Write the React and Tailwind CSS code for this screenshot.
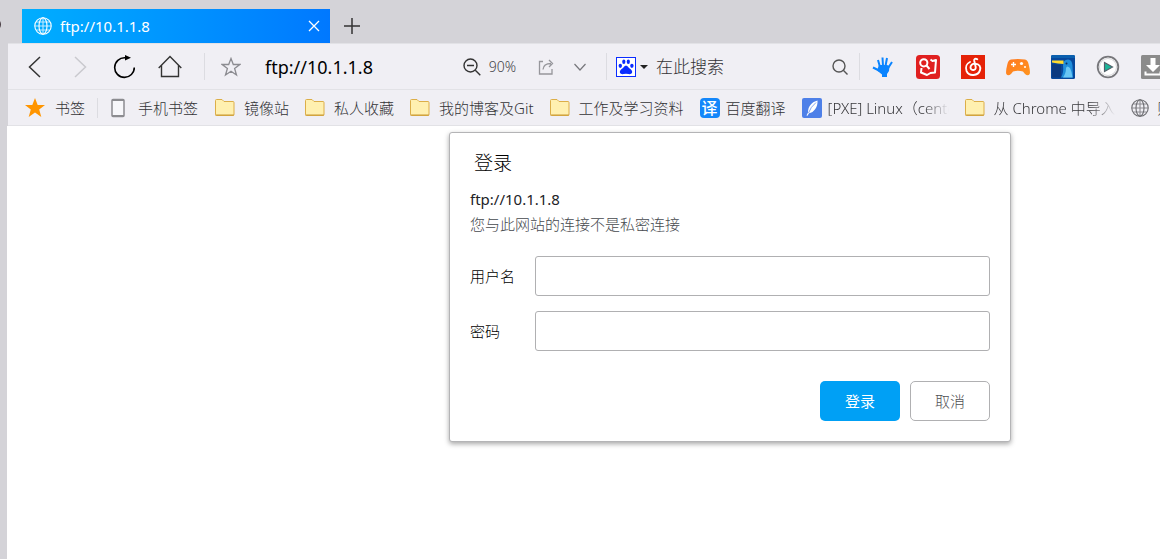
import React from 'react'

const Globe = ({ className }) => (
  <svg className={className} viewBox="0 0 18 18" fill="none" stroke="currentColor" strokeWidth="1.1">
    <circle cx="9" cy="9" r="8.2" />
    <ellipse cx="9" cy="9" rx="4" ry="8.2" />
    <path d="M9 .8v16.4M.8 9h16.4M2.2 5h13.6M2.2 13h13.6" strokeOpacity=".75" />
  </svg>
)

const Folder = () => (
  <svg className="h-5 w-5 shrink-0" viewBox="0 0 20 20">
    <path d="M.5 2.5q0-1 1-1h5.500l2 2h9q1 0 1 1v12q0 1-1 1H1.500q-1 0-1-1z" fill="#fff0b0" stroke="#dcae48" />
    <path d="M.5 17h18.500" stroke="#c99a35" />
  </svg>
)

const Star = () => (
  <svg className="h-5 w-5 shrink-0" viewBox="0 0 20 20">
    <path d="M10 0l2.700 7H20l-5.800 4.600L16.300 19 10 14.600 3.700 19l2.100-7.400L0 7h7.300z" fill="#ff9500" />
  </svg>
)

const Phone = () => (
  <svg className="h-5 w-4 shrink-0" viewBox="0 0 16 20">
    <rect x="2" y="1.500" width="12" height="17" rx="1" fill="#f7f7fa" stroke="#8c8c90" strokeWidth="1.500" />
    <path d="M2 2h12M2 18h12" stroke="#8c8c90" strokeWidth="2" />
  </svg>
)

const Feather = () => (
  <svg className="h-5 w-5 shrink-0" viewBox="0 0 20 20">
    <rect width="20" height="20" rx="2" fill="#4e80e8" />
    <path d="M15.500 2.500C10 4 6 8 6 14.500L4.500 17.500l1 .3 1.500-2.500C12 14.500 16 9 15.500 2.500z" fill="#fff" />
    <path d="M14 4.500Q8.500 9 6.500 15" stroke="#4e80e8" strokeWidth=".7" fill="none" />
  </svg>
)

const Translate = () => (
  <span className="flex h-5 w-5 shrink-0 items-center justify-center rounded bg-[#1487fa] text-base font-medium text-white">译</span>
)

const bookmarks = [
  { icon: <Folder />, label: '镜像站' },
  { icon: <Folder />, label: '私人收藏' },
  { icon: <Folder />, label: '我的博客及Git' },
  { icon: <Folder />, label: '工作及学习资料' },
  { icon: <Translate />, label: '百度翻译', tight: true },
  { icon: <Feather />, label: '[PXE] Linux（centos）', tight: true, fade: true },
  { icon: <Folder />, label: '从 Chrome 中导入', fade: true },
  { icon: <Globe className="h-[18px] w-[18px] shrink-0 text-[#6c6c70]" />, label: '购物' },
]

const Bookmark = ({ icon, label, tight, fade }) => (
  <a href="#" className={`flex shrink-0 items-center ${tight ? 'gap-[6px]' : 'gap-[9px]'}`}>
    {icon}
    {fade ? (
      <span className="w-[121px] overflow-hidden bg-linear-to-r from-[#333336] from-80% to-transparent bg-clip-text whitespace-nowrap text-transparent">
        {label}
      </span>
    ) : (
      <span className="whitespace-nowrap">{label}</span>
    )}
  </a>
)

const TabBar = () => (
  <div className="flex h-[43px] items-end pl-[14px]">
    <div className="flex h-[34px] w-[308px] items-center bg-linear-to-r from-[#00aeff] to-[#0078ff] pr-[10px] pl-3 text-white">
      <Globe className="h-[18px] w-[18px]" />
      <span className="ml-2 flex-1 pt-px text-[15px]">ftp://10.1.1.8</span>
      <button aria-label="关闭标签页">
        <svg className="h-3 w-3" viewBox="0 0 12 12" stroke="currentColor" strokeWidth="1.300">
          <path d="M1 1l10 10M11 1L1 11" />
        </svg>
      </button>
    </div>
    <button aria-label="新建标签页" className="mb-2 ml-[13px]">
      <svg className="h-[18px] w-[18px]" viewBox="0 0 18 18" stroke="#333" strokeWidth="1.500">
        <path d="M9 1v16M1 9h16" />
      </svg>
    </button>
  </div>
)

const Extensions = () => (
  <div className="-mr-[5px] flex shrink-0 items-center gap-[21px]">
    <button aria-label="手势">
      <svg className="h-6 w-6" viewBox="0 0 24 24" fill="none" stroke="#0a84ff" strokeWidth="2">
        <path d="M9 12L7 5M12 11l-.5-8.500M14.500 11l1.500-8M16.500 14l4.500-7M9 16l-7-3.500" />
        <path d="M8 10l8 0 2.500 1-.5 5-2 3v3h-5v-2.500l-5-4z" fill="#0a84ff" stroke="none" />
      </svg>
    </button>
    <button aria-label="截图">
      <svg className="h-6 w-6" viewBox="0 0 24 24" fill="none" stroke="#fff" strokeLinejoin="round">
        <rect width="24" height="24" rx="3.500" fill="#e02020" stroke="none" />
        <circle cx="7.800" cy="7.800" r="3.600" strokeWidth="2" />
        <path d="M10.500 10.500l3 3.500M14.500 4.500l2 1.500 3.500-1-1 12.500-4.500.5-3.500 2-6-2.500.5-4.500" strokeWidth="2" />
      </svg>
    </button>
    <button aria-label="音乐">
      <svg className="h-6 w-6" viewBox="0 0 24 24" fill="none" stroke="#fff" strokeWidth="1.900" strokeLinecap="round">
        <rect width="24" height="24" fill="#e52207" stroke="none" />
        <path d="M16.300 4.300c-1.700-1.200-3.500-.4-3.100 1.500l1.500 6.200c.7 3.500-4.900 4.200-5.200.6-.2-2.500 2-4 4.500-4 4.500 0 6 3.400 5 6.500-1.800 6-11 6.600-13.400 1C4.100 12 5.800 8.400 9 7" />
      </svg>
    </button>
    <button aria-label="游戏">
      <svg className="h-6 w-6" viewBox="0 0 24 24">
        <defs>
          <linearGradient id="pad" x1="0" y1="0" x2="1" y2="1">
            <stop stopColor="#ff7820" />
            <stop offset="1" stopColor="#ff951f" />
          </linearGradient>
        </defs>
        <path d="M5 4.500Q12 3.500 19 4.500q2.800.5 3.700 5 1.800 7 1 9.500-1.700 2.500-4.700 0l-2-2.500q-5-1.500-10 0L5 19q-3 2.500-4.700 0-.8-2.500 1-9.500.9-4.500 3.700-5z" fill="url(#pad)" />
        <path d="M7.500 7v5M5 9.500h5" stroke="#fff" strokeWidth="1.400" />
        <circle cx="15.500" cy="8.500" r="1.600" fill="#fff" />
        <circle cx="19" cy="12" r="1" fill="#fff" />
      </svg>
    </button>
    <button aria-label="迅雷">
      <svg className="h-6 w-6" viewBox="0 0 24 24">
        <rect width="24" height="24" rx="1.500" fill="#07489c" />
        <path d="M0 1.500Q0 0 1.500 0h21Q24 0 24 1.500V3H0z" fill="#0a5fae" />
        <path d="M1 9l9 1v12.500H1z" fill="#0b3a80" />
        <path d="M10 22.500q3-5 2-12 0-6 5-6 4 0 4.500 6l.5 12z" fill="#1f8edb" />
        <path d="M12 22.500q3-4 3-9.500 1-3 4 0 2 4 2.500 9.500z" fill="#68c6f4" />
        <path d="M1 5.500h11.500v3.500Q7 8.500 1 7.500z" fill="#ffdc2e" />
        <circle cx="15.500" cy="8.500" r="1" fill="#062f64" />
      </svg>
    </button>
    <button aria-label="播放器">
      <svg className="h-6 w-6" viewBox="0 0 24 24">
        <circle cx="12" cy="12" r="10.300" fill="#fff" stroke="#77777b" strokeWidth="1.800" />
        <circle cx="12" cy="12" r="8.500" fill="none" stroke="#d5d5d8" />
        <path d="M8.500 7.500l8 4.500-8 4.500z" fill="#1cb79a" stroke="#55606a" strokeWidth="1.200" />
      </svg>
    </button>
    <button aria-label="下载">
      <svg className="h-6 w-6" viewBox="0 0 24 24">
        <rect width="24" height="24" rx="1.500" fill="#8b8b8b" />
        <path d="M9.500 3h5v7H19l-7 7-7-7h4.500z" fill="#fff" />
        <path d="M4.500 16.500V19.500h15v-3" fill="none" stroke="#fff" strokeWidth="2" />
      </svg>
    </button>
  </div>
)

const Toolbar = () => (
  <div className="flex h-[47px] items-center overflow-hidden border-t border-b border-[#e2e2e6] bg-[#f0eff4]">
    <div className="flex shrink-0 items-center gap-[23px] pl-[18px] text-[#333]">
      <button aria-label="后退">
        <svg className="h-[22px] w-[18px]" viewBox="0 0 18 22" fill="none" stroke="currentColor" strokeWidth="1.500">
          <path d="M14 1L3.500 11 14 21" />
        </svg>
      </button>
      <button aria-label="前进" className="ml-[5px] text-[#c9c9ce]">
        <svg className="h-[22px] w-[18px]" viewBox="0 0 18 22" fill="none" stroke="currentColor" strokeWidth="1.500">
          <path d="M3 1l10.500 10L3 21" />
        </svg>
      </button>
      <button aria-label="刷新" className="text-black">
        <svg className="h-6 w-[22px]" viewBox="0 0 22 24" fill="none" stroke="currentColor" strokeWidth="1.600">
          <path d="M14 2.800h-2a9.800 9.800 0 1 0 9.300 9.700" />
          <path d="M12 0l6 2.800-6 2.700z" fill="currentColor" stroke="none" />
        </svg>
      </button>
      <button aria-label="主页">
        <svg className="h-6 w-6" viewBox="0 0 24 24" fill="none" stroke="currentColor" strokeWidth="1.400">
          <path d="M.7 13L12 1.500 23.300 13M3.500 10.500v11h17v-11" />
        </svg>
      </button>
    </div>
    <div className="ml-[22px] h-[27px] w-px shrink-0 bg-[#dcdce1]" />
    <button aria-label="收藏" className="ml-4 shrink-0">
      <svg className="h-5 w-5" viewBox="0 0 20 20" fill="none" stroke="#8c8c91" strokeWidth="1.300">
        <path d="M10 1.500l2.300 6h6.500l-5.200 4 1.900 6.500L10 14.200 4.500 18l1.900-6.500-5.200-4h6.500z" />
      </svg>
    </button>
    <input
      aria-label="地址"
      defaultValue="ftp://10.1.1.8"
      className="ml-6 min-w-0 flex-1 bg-transparent text-lg text-black outline-none"
    />
    <button className="flex shrink-0 items-center gap-2 text-sm font-light text-[#444448]">
      <svg className="h-[18px] w-[18px]" viewBox="0 0 18 18" fill="none" stroke="#333" strokeWidth="1.400">
        <circle cx="7.500" cy="7.500" r="6.500" />
        <path d="M12.300 12.300l5 5M4 7.500h7" />
      </svg>
      90%
    </button>
    <button aria-label="分享" className="ml-[22px] shrink-0">
      <svg className="h-4 w-4" viewBox="0 0 16 16" fill="none" stroke="#96969b" strokeWidth="1.300">
        <path d="M5 2.500H1.500V15h12.500v-5M5 10.500q.500-6 8-6M11 1l3.500 3.500L11 8" />
      </svg>
    </button>
    <button aria-label="更多" className="ml-5 shrink-0">
      <svg className="h-3 w-3" viewBox="0 0 12 12" fill="none" stroke="#77777c" strokeWidth="1.200">
        <path d="M.5 3L6 9l5.500-6" />
      </svg>
    </button>
    <div className="ml-5 h-[27px] w-px shrink-0 bg-[#dcdce1]" />
    <button aria-label="搜索引擎" className="ml-[9px] flex shrink-0 items-center gap-1">
      <svg className="h-5 w-5" viewBox="0 0 20 20" fill="#0a2cff">
        <rect x=".5" y=".5" width="19" height="19" fill="#fff" stroke="#0a2cff" />
        <ellipse cx="4.300" cy="8.800" rx="1.700" ry="2.100" />
        <ellipse cx="7.800" cy="4.800" rx="1.600" ry="2.200" />
        <ellipse cx="12.300" cy="4.800" rx="1.600" ry="2.200" />
        <ellipse cx="15.900" cy="8.800" rx="1.700" ry="2.100" />
        <path d="M10 8.500q1.500 0 3 2.500 4 2.500 3 5-1 1.500-3.500 1-2.500-.6-5 0-2.500.5-3.500-1-1-2.500 3-5 1.500-2.500 3-2.500z" />
      </svg>
      <svg className="h-2 w-2" viewBox="0 0 8 8" fill="#222">
        <path d="M0 2h8L4 6z" />
      </svg>
    </button>
    <input
      aria-label="搜索"
      placeholder="在此搜索"
      className="ml-2 w-[176px] shrink-0 bg-transparent text-[17px] font-light outline-none placeholder:text-[#333336]"
    />
    <button aria-label="搜索" className="shrink-0">
      <svg className="h-4 w-4" viewBox="0 0 16 16" fill="none" stroke="#555" strokeWidth="1.400">
        <circle cx="7" cy="7" r="6" />
        <path d="M11.300 11.300L15.500 15.500" />
      </svg>
    </button>
    <div className="mx-[11px] h-[27px] w-px shrink-0 bg-[#dcdce1]" />
    <Extensions />
  </div>
)

const BookmarkBar = () => (
  <nav className="flex h-9 items-center gap-4 overflow-hidden border-b border-[#e2e2e6] bg-[#f0eff4] pt-px pl-[17px] text-[15px] font-light text-[#333336]">
    <a href="#" className="flex shrink-0 items-center gap-[10px]">
      <Star />
      书签
    </a>
    <div className="-mx-1 h-5 w-px shrink-0 bg-[#dcdce1]" />
    <a href="#" className="mr-px flex shrink-0 items-center gap-3">
      <Phone />
      手机书签
    </a>
    {bookmarks.map((b) => (
      <Bookmark key={b.label} {...b} />
    ))}
  </nav>
)

const Field = ({ id, label, type }) => (
  <div className="flex items-center">
    <label htmlFor={id} className="w-[65px] shrink-0 font-light text-black">{label}</label>
    <input id={id} type={type} className="h-10 min-w-0 flex-1 rounded-[3px] border border-[#b0b0b2] bg-white px-3 outline-none" />
  </div>
)

const LoginDialog = () => (
  <form
    role="dialog"
    aria-labelledby="login-title"
    onSubmit={(e) => e.preventDefault()}
    className="mt-[6px] mr-[149px] ml-auto w-[562px] rounded-[3px] border border-[#b4b4b6] bg-white px-5 pt-[18px] pb-5 text-[15px] text-[#222226] shadow-[0_2px_5px_rgba(0,0,0,0.35)]"
  >
    <h1 id="login-title" className="pl-1 text-[19px] leading-6 font-light text-black">登录</h1>
    <p className="mt-3 leading-[25px]">ftp://10.1.1.8</p>
    <p className="leading-[25px] font-light text-[#46494e]">您与此网站的连接不是私密连接</p>
    <div className="mt-[19px] flex flex-col gap-[15px]">
      <Field id="username" label="用户名" type="text" />
      <Field id="password" label="密码" type="password" />
    </div>
    <div className="mt-[30px] flex justify-end gap-[10px]">
      <button type="submit" className="h-10 w-20 rounded-[5px] bg-[#00a0f5] text-white">登录</button>
      <button type="button" className="h-10 w-20 rounded-[5px] border border-[#b0b0b2] bg-white font-light text-[#505054]">取消</button>
    </div>
  </form>
)

const App = () => (
  <div className="flex min-h-screen flex-col overflow-hidden bg-[#d4d3d8] font-['Noto_Sans','Noto_Sans_CJK_SC',sans-serif]">
    <header className="relative pl-2">
      {/* Avatar, cut off by the window edge */}
      <div className="absolute top-[18px] -left-3 h-[13px] w-[13px] rounded-full bg-[#4a3f45]" />
      <TabBar />
      <Toolbar />
      <BookmarkBar />
    </header>
    <main className="ml-[7px] flex-1 bg-white">
      <LoginDialog />
    </main>
  </div>
)

export default App
